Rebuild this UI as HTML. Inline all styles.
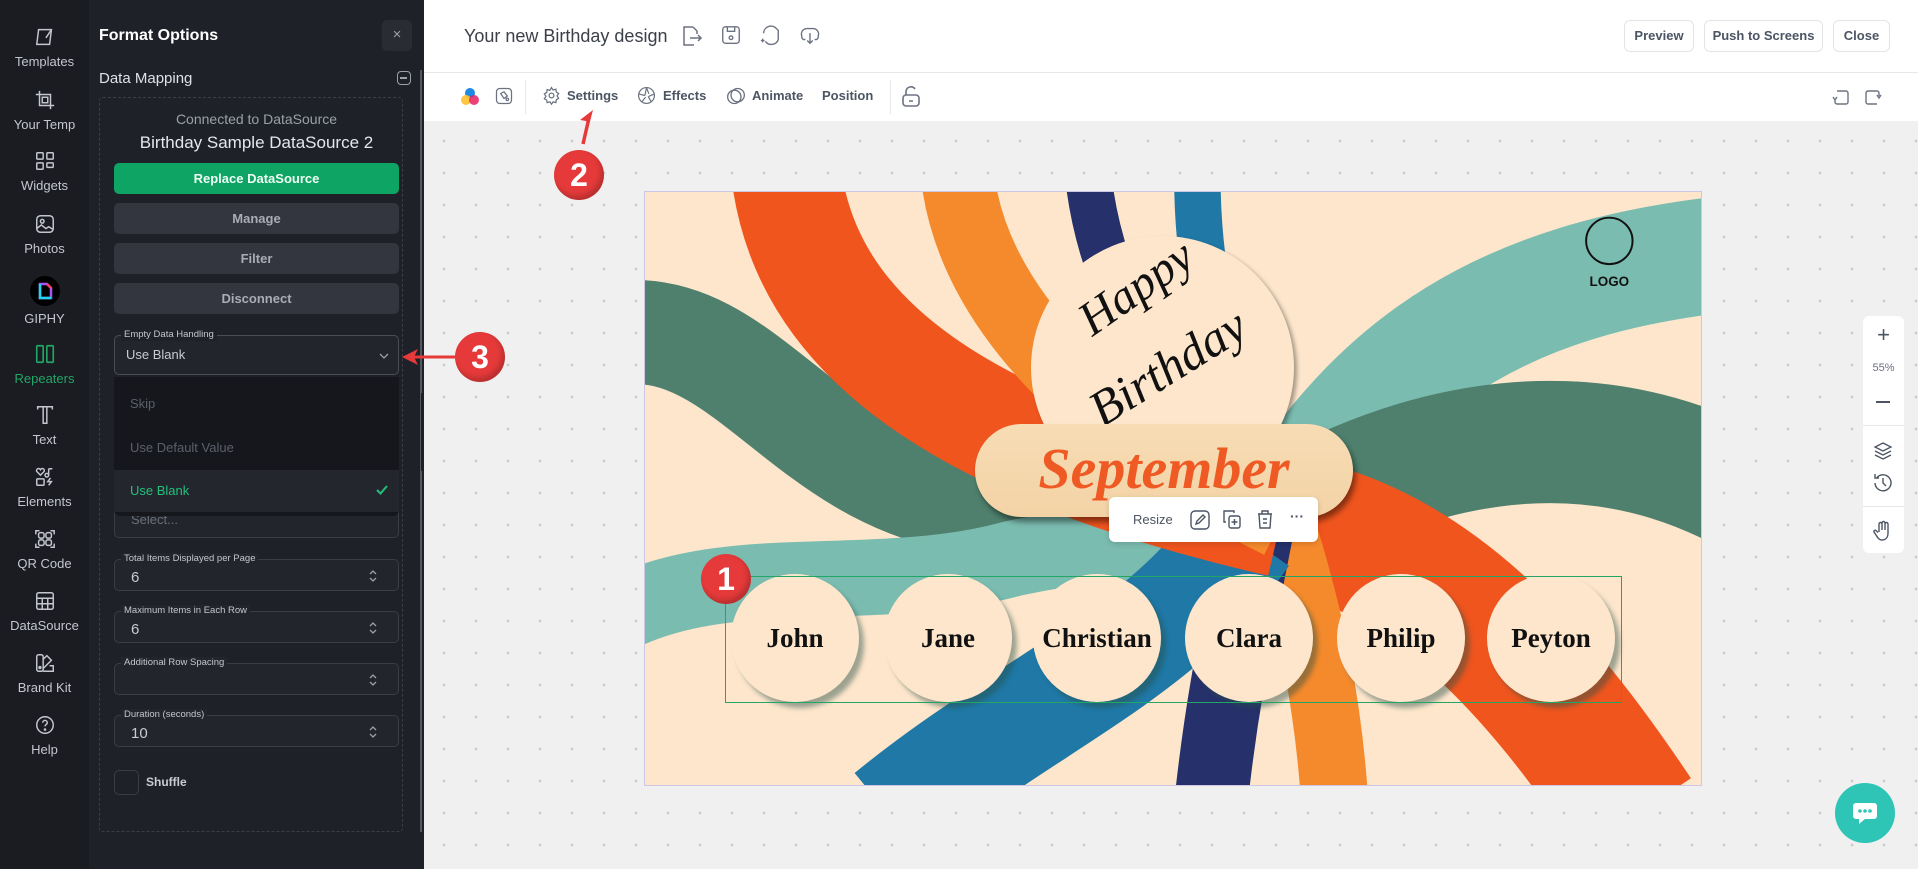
<!DOCTYPE html>
<html><head><meta charset="utf-8">
<style>
*{box-sizing:border-box;margin:0;padding:0}
body{width:1918px;height:869px;overflow:hidden;position:relative;font-family:"Liberation Sans",sans-serif;background:#f0f0f0}
.a{position:absolute}
#bar{left:0;top:0;width:89px;height:869px;background:#1a1c22}
#panel{left:89px;top:0;width:335px;height:869px;background:#1f2129}
.ni{position:absolute;left:0;width:89px;text-align:center;color:#c4c7cd;font-size:13px}
.ni svg{display:block;margin:0 auto}
.btn{position:absolute;left:114px;width:285px;height:31px;border-radius:5px;background:#34363f;color:#a9acb4;font-weight:bold;font-size:13px;text-align:center;line-height:31px}
.fs{position:absolute;left:114px;width:285px;height:32px;border:1px solid #3a3d46;border-radius:5px;background:#23252d}
.fs .lb{position:absolute;left:6px;top:-7px;font-size:9.5px;color:#c4c7cd;background:#23252d;padding:0 3px;line-height:12px}
.fs .v{position:absolute;left:16px;top:9px;font-size:15px;color:#c9ccd2}
.fs svg{position:absolute;right:20px;top:8px}
.tb{position:absolute;top:20px;height:32px;border:1px solid #e2e4e8;border-radius:6px;background:#fff;color:#4b5563;font-size:13px;font-weight:bold;text-align:center;line-height:30px}
.ti{position:absolute;top:88px;font-size:13px;font-weight:bold;color:#4b5563}
.badge{position:absolute;width:50px;height:50px;border-radius:50%;background:#e63a3a;color:#fff;font-weight:bold;font-size:32px;text-align:center;line-height:50px;box-shadow:inset -3px -4px 6px rgba(0,0,0,.2)}
.nm{position:absolute;top:574px;width:128px;height:128px;border-radius:50%;background:#fde6cc;box-shadow:5px 6px 5px rgba(40,80,70,.45);font-family:"Liberation Serif",serif;font-weight:bold;font-size:27px;color:#111;text-align:center;line-height:128px}
</style></head><body>

<div id="bar" class="a">
 <div class="ni" style="top:26px"><svg width="22" height="22" viewBox="0 0 24 24" fill="none" stroke="#c4c7cd" stroke-width="1.6"><path d="M5 4h14l-2 16H3z"/><path d="M19 4l-6 9"/></svg><div style="margin-top:6px">Templates</div></div>
 <div class="ni" style="top:89px"><svg width="22" height="22" viewBox="0 0 24 24" fill="none" stroke="#c4c7cd" stroke-width="1.6"><path d="M6 2v16h16M2 6h16v16"/><rect x="9" y="9" width="6" height="6"/></svg><div style="margin-top:6px">Your Temp</div></div>
 <div class="ni" style="top:150px"><svg width="22" height="22" viewBox="0 0 24 24" fill="none" stroke="#c4c7cd" stroke-width="1.6"><rect x="3" y="3" width="7" height="7" rx="1"/><rect x="14" y="3" width="7" height="7" rx="1"/><rect x="3" y="14" width="7" height="7" rx="1"/><rect x="14" y="14" width="7" height="5" rx="1"/></svg><div style="margin-top:6px">Widgets</div></div>
 <div class="ni" style="top:213px"><svg width="22" height="22" viewBox="0 0 24 24" fill="none" stroke="#c4c7cd" stroke-width="1.6"><rect x="3" y="3" width="18" height="18" rx="4"/><circle cx="9" cy="9" r="2"/><path d="M3 17l5-4 5 4 3-2 5 3"/></svg><div style="margin-top:6px">Photos</div></div>
 <div class="ni" style="top:276px"><div style="width:30px;height:30px;border-radius:50%;background:#000;margin:0 auto;position:relative"><svg width="30" height="30" viewBox="0 0 30 30"><path d="M10 8h7l4 4v10H10z" fill="none" stroke="#a855f7" stroke-width="2.5"/><path d="M10 8v14h11" fill="none" stroke="#22d3ee" stroke-width="2.5"/><path d="M17 8l4 4" stroke="#f43f5e" stroke-width="2.5"/></svg></div><div style="margin-top:5px">GIPHY</div></div>
 <div class="ni" style="top:343px;color:#22a565"><svg width="22" height="22" viewBox="0 0 24 24" fill="none" stroke="#22a565" stroke-width="1.8"><rect x="3" y="3" width="7" height="18" rx="1"/><rect x="14" y="3" width="7" height="18" rx="1"/></svg><div style="margin-top:6px">Repeaters</div></div>
 <div class="ni" style="top:404px"><svg width="22" height="22" viewBox="0 0 24 24" fill="none" stroke="#c4c7cd" stroke-width="1.6"><path d="M4 6V3h16v3M10 3v18h4V3"/></svg><div style="margin-top:6px">Text</div></div>
 <div class="ni" style="top:466px"><svg width="22" height="22" viewBox="0 0 24 24" fill="none" stroke="#c4c7cd" stroke-width="1.6"><path d="M7 10l-4-4a2 2 0 014-2 2 2 0 014 2z"/><path d="M16 3v7M16 3h4"/><circle cx="14" cy="10" r="2"/><rect x="3" y="14" width="8" height="7" rx="1"/><path d="M18 13l-3 4h4l-3 4"/></svg><div style="margin-top:6px">Elements</div></div>
 <div class="ni" style="top:528px"><svg width="22" height="22" viewBox="0 0 24 24" fill="none" stroke="#c4c7cd" stroke-width="1.6"><rect x="5" y="5" width="6" height="6" rx="2"/><rect x="13" y="5" width="6" height="6" rx="2"/><rect x="5" y="13" width="6" height="6" rx="2"/><rect x="13" y="13" width="6" height="6" rx="2"/><path d="M2 7V3h4M18 3h4v4M2 17v4h4M18 21h4v-4"/></svg><div style="margin-top:6px">QR Code</div></div>
 <div class="ni" style="top:590px"><svg width="22" height="22" viewBox="0 0 24 24" fill="none" stroke="#c4c7cd" stroke-width="1.6"><rect x="3" y="3" width="18" height="18" rx="2"/><path d="M3 9h18M3 15h18M9 9v12M15 9v12"/></svg><div style="margin-top:6px">DataSource</div></div>
 <div class="ni" style="top:652px"><svg width="22" height="22" viewBox="0 0 24 24" fill="none" stroke="#c4c7cd" stroke-width="1.6"><rect x="3" y="3" width="7" height="18" rx="2"/><path d="M10 8l4-4 5 5-9 9M10 21h11v-6h-4"/><circle cx="6.5" cy="17" r="1"/></svg><div style="margin-top:6px">Brand Kit</div></div>
 <div class="ni" style="top:714px"><svg width="22" height="22" viewBox="0 0 24 24" fill="none" stroke="#c4c7cd" stroke-width="1.6"><circle cx="12" cy="12" r="9"/><path d="M9.5 9.5a2.5 2.5 0 115 0c0 1.8-2.5 2-2.5 4"/><circle cx="12" cy="17" r=".6" fill="#c4c7cd"/></svg><div style="margin-top:6px">Help</div></div>
</div>

<div id="panel" class="a">
 <div class="a" style="left:10px;top:27px;color:#fff;font-weight:bold;font-size:16px">Format Options</div>
 <div class="a" style="left:293px;top:20px;width:30px;height:31px;border-radius:5px;background:#2a2c34;color:#9ca0a8;font-size:15px;text-align:center;line-height:30px">×</div>
 <div class="a" style="left:10px;top:70px;color:#dfe1e5;font-size:15px">Data Mapping</div>
 <div class="a" style="left:308px;top:71px;width:14px;height:14px;border:1.5px solid #9ca0a8;border-radius:4px"><div style="position:absolute;left:2px;top:5px;width:7px;height:1.5px;background:#9ca0a8"></div></div>
 <div class="a" style="left:331px;top:70px;width:2px;height:762px;background:#55585f"></div>
 <div class="a" style="left:10px;top:97px;width:304px;height:735px;border:1px dashed #3b3e46;border-radius:4px"></div>
</div>
<div class="a" style="left:89px;top:111px;width:335px;text-align:center;color:#9aa0a8;font-size:14px">Connected to DataSource</div>
<div class="a" style="left:89px;top:133px;width:335px;text-align:center;color:#e5e7eb;font-size:17px">Birthday Sample DataSource 2</div>
<div class="btn" style="top:163px;background:#0ea463;color:#f0fff6">Replace DataSource</div>
<div class="btn" style="top:203px">Manage</div>
<div class="btn" style="top:243px">Filter</div>
<div class="btn" style="top:283px">Disconnect</div>

<div class="fs" style="top:335px;height:40px;border-color:#4a4d56"><div class="lb" style="background:#1f2129">Empty Data Handling</div><div class="v" style="top:11px;left:11px;font-size:13px">Use Blank</div>
<svg width="12" height="12" viewBox="0 0 12 12" style="top:14px;right:8px"><path d="M2 4l4 4 4-4" fill="none" stroke="#9ca0a8" stroke-width="1.3"/></svg></div>
<div class="fs" style="top:502px;height:36px"><div class="v" style="top:9px;font-size:13px;color:#6b6f78;clip-path:inset(4px 0 0 0)">Select...</div></div>
<div class="a" style="left:114px;top:377px;width:285px;height:139px;background:#15171c;border-radius:0 0 6px 6px"></div>
<div class="a" style="left:130px;top:396px;color:#5c606a;font-size:13px">Skip</div>
<div class="a" style="left:130px;top:440px;color:#5c606a;font-size:13px">Use Default Value</div>
<div class="a" style="left:114px;top:470px;width:285px;height:42px;background:#24262e"></div>
<div class="a" style="left:130px;top:483px;color:#22c07a;font-size:13px">Use Blank</div>
<svg class="a" style="left:375px;top:484px" width="14" height="12" viewBox="0 0 14 12"><path d="M2 6l3.5 3.5L12 2" fill="none" stroke="#22c07a" stroke-width="2"/></svg>

<div class="fs" style="top:559px"><div class="lb">Total Items Displayed per Page</div><div class="v">6</div><svg width="10" height="16" viewBox="0 0 10 16"><path d="M2 6l3-3 3 3M2 10l3 3 3-3" fill="none" stroke="#9ca0a8" stroke-width="1.3"/></svg></div>
<div class="fs" style="top:611px"><div class="lb">Maximum Items in Each Row</div><div class="v">6</div><svg width="10" height="16" viewBox="0 0 10 16"><path d="M2 6l3-3 3 3M2 10l3 3 3-3" fill="none" stroke="#9ca0a8" stroke-width="1.3"/></svg></div>
<div class="fs" style="top:663px"><div class="lb">Additional Row Spacing</div><svg width="10" height="16" viewBox="0 0 10 16"><path d="M2 6l3-3 3 3M2 10l3 3 3-3" fill="none" stroke="#9ca0a8" stroke-width="1.3"/></svg></div>
<div class="fs" style="top:715px"><div class="lb">Duration (seconds)</div><div class="v">10</div><svg width="10" height="16" viewBox="0 0 10 16"><path d="M2 6l3-3 3 3M2 10l3 3 3-3" fill="none" stroke="#9ca0a8" stroke-width="1.3"/></svg></div>
<div class="a" style="left:114px;top:770px;width:25px;height:25px;border:1px solid #3a3d46;border-radius:5px;background:#1f2129"></div>
<div class="a" style="left:146px;top:775px;color:#c9ccd2;font-size:12px;font-weight:bold">Shuffle</div>
<div class="a" style="left:421px;top:393px;width:14px;height:78px;background:#1f2129;border-radius:0 8px 8px 0"></div>
<svg class="a" style="left:423px;top:426px" width="10" height="12" viewBox="0 0 10 12"><path d="M7 2L3 6l4 4" fill="none" stroke="#c4c7cd" stroke-width="1.6"/></svg>

<div class="a" style="left:424px;top:0;width:1494px;height:121px;background:#fff"></div>
<div class="a" style="left:424px;top:72px;width:1494px;height:1px;background:#e6e7ea"></div>
<div class="a" style="left:464px;top:26px;font-size:18px;color:#3b3f48">Your new Birthday design</div>
<svg class="a" style="left:679px;top:24px" width="24" height="24" viewBox="0 0 24 24" fill="none" stroke="#6b7280" stroke-width="1.5"><path d="M14 3H5v18h10M14 3l4 4v3"/><path d="M11 14h11M19 11l3 3-3 3"/></svg>
<svg class="a" style="left:720px;top:24px" width="22" height="22" viewBox="0 0 24 24" fill="none" stroke="#6b7280" stroke-width="1.5"><rect x="3" y="3" width="18" height="18" rx="3"/><path d="M8 3v5h8V3"/><circle cx="12" cy="15" r="2"/></svg>
<svg class="a" style="left:759px;top:24px" width="22" height="22" viewBox="0 0 24 24" fill="none" stroke="#6b7280" stroke-width="1.5"><path d="M5 10a8 8 0 0114-5l2 2v10a8 8 0 01-14 2"/><path d="M4 16v4M2 18h4"/></svg>
<svg class="a" style="left:799px;top:24px" width="22" height="22" viewBox="0 0 24 24" fill="none" stroke="#6b7280" stroke-width="1.5"><path d="M7 17H5a4 4 0 01-2-4 6 6 0 016-8h6a6 6 0 016 8 4 4 0 01-2 4h-2"/><path d="M12 10v11M9 18l3 3 3-3"/></svg>
<div class="tb" style="left:1624px;width:70px">Preview</div>
<div class="tb" style="left:1704px;width:119px">Push to Screens</div>
<div class="tb" style="left:1833px;width:57px">Close</div>

<svg class="a" style="left:459px;top:86px" width="22" height="22" viewBox="0 0 22 22"><circle cx="11" cy="7" r="5" fill="#1e88e5"/><circle cx="7" cy="14" r="5" fill="#fbc02d" opacity=".9"/><circle cx="15" cy="14" r="5" fill="#e91e63" opacity=".85"/></svg>
<svg class="a" style="left:494px;top:86px" width="20" height="20" viewBox="0 0 24 24" fill="none" stroke="#6b7280" stroke-width="1.5"><rect x="3" y="3" width="18" height="18" rx="4"/><path d="M8 9l4-2 4 5-4 3z"/><circle cx="16" cy="16" r="1.5"/></svg>
<div class="a" style="left:525px;top:80px;width:1px;height:34px;background:#e6e7ea"></div>
<svg class="a" style="left:542px;top:86px" width="19" height="19" viewBox="0 0 24 24" fill="none" stroke="#6b7280" stroke-width="1.6"><circle cx="12" cy="12" r="3"/><path d="M12 2l2 3 3.5-1 .5 3.5 3 2-2 3 2 3-3 2-.5 3.5-3.5-1-2 3-2-3-3.5 1L6 18l-3-2 2-3-2-3 3-2 .5-3.5 3.5 1z"/></svg>
<div class="ti" style="left:567px">Settings</div>
<svg class="a" style="left:637px;top:86px" width="19" height="19" viewBox="0 0 24 24" fill="none" stroke="#6b7280" stroke-width="1.5"><circle cx="12" cy="12" r="10"/><path d="M12 2l3 8M22 10l-7 3M18 20l-4-7M6 20l5-6M2 10l8 2M12 2l-2 10"/></svg>
<div class="ti" style="left:663px">Effects</div>
<svg class="a" style="left:726px;top:86px" width="20" height="20" viewBox="0 0 24 24" fill="none" stroke="#6b7280" stroke-width="1.6"><circle cx="10" cy="13" r="8"/><circle cx="14" cy="11" r="8"/></svg>
<div class="ti" style="left:752px">Animate</div>
<div class="ti" style="left:822px">Position</div>
<div class="a" style="left:890px;top:80px;width:1px;height:34px;background:#e6e7ea"></div>
<svg class="a" style="left:901px;top:84px" width="20" height="24" viewBox="0 0 20 24" fill="none" stroke="#6b7280" stroke-width="1.6"><rect x="2" y="11" width="16" height="11" rx="3"/><path d="M5 11V7a5 5 0 019-2M8 17h4"/></svg>
<svg class="a" style="left:1832px;top:88px" width="18" height="18" viewBox="0 0 18 18" fill="none" stroke="#6b7280" stroke-width="1.4"><path d="M5 3h9a2 2 0 012 2v9a2 2 0 01-2 2H5a2 2 0 01-2-2v-2"/><path d="M1 9l2 3 2-3"/></svg>
<svg class="a" style="left:1864px;top:88px" width="18" height="18" viewBox="0 0 18 18" fill="none" stroke="#6b7280" stroke-width="1.4"><path d="M13 16H4a2 2 0 01-2-2V5a2 2 0 012-2h9a2 2 0 012 2v3"/><path d="M13 7l2 3 2-3"/></svg>

<div class="a" style="left:424px;top:121px;width:1494px;height:748px;background-color:#f0f0f0;background-image:radial-gradient(circle,#cdcdcd 1.2px,transparent 1.6px);background-size:32px 32px;background-position:4px 4px"></div>

<svg class="a" style="left:645px;top:192px;outline:1px solid #cfc6e6" width="1056" height="593" viewBox="0 0 864 485" preserveAspectRatio="none">
 <rect width="864" height="485" fill="#fde6cc"/>
 <g fill="none" stroke-linecap="butt">
  <path d="M-20 115 C80 105 130 230 260 252 C360 268 440 258 530 270" stroke="#4f7f6d" stroke-width="85"/>
  <path d="M-20 345 C70 300 190 330 300 300 C390 280 450 288 530 280" stroke="#7bbcb0" stroke-width="62"/>
  <path d="M520 270 C600 140 700 70 890 50" stroke="#7bbcb0" stroke-width="95"/>
  <path d="M520 270 C640 200 770 180 890 240" stroke="#4f7f6d" stroke-width="100"/>
  <path d="M520 270 C640 290 730 390 810 510" stroke="#f0551e" stroke-width="110"/>
  <path d="M520 270 C545 350 560 420 565 510" stroke="#f58a2c" stroke-width="55"/>
  <path d="M500 280 C480 380 470 430 462 510" stroke="#26306b" stroke-width="60"/>
  <path d="M490 280 C420 380 310 420 200 510" stroke="#1f78a6" stroke-width="90"/>
  <path d="M115 -20 C130 120 260 210 520 270" stroke="#f0551e" stroke-width="90"/>
  <path d="M255 -20 C265 100 380 200 520 270" stroke="#f58a2c" stroke-width="60"/>
  <path d="M362 -20 C372 100 450 200 520 270" stroke="#26306b" stroke-width="38"/>
  <path d="M452 -20 C450 100 490 200 520 270" stroke="#1f78a6" stroke-width="38"/>
 </g>
 <circle cx="789" cy="40" r="19" fill="none" stroke="#111" stroke-width="1.6"/>
 <text x="789" y="77" font-family="Liberation Sans" font-weight="bold" font-size="11" text-anchor="middle" fill="#111">LOGO</text>
</svg>
<div class="a" style="left:1031px;top:236px;width:263px;height:263px;border-radius:50%;background:#fde6cc;box-shadow:3px 3px 4px rgba(0,0,0,.35)"></div>
<div class="a" style="left:1070px;top:305px;font-family:'Liberation Serif',serif;font-style:italic;font-size:48px;color:#111;transform:rotate(-35deg);transform-origin:left top;line-height:48px">Happy</div>
<div class="a" style="left:1080px;top:392px;font-family:'Liberation Serif',serif;font-style:italic;font-size:50px;color:#111;transform:rotate(-32deg);transform-origin:left top;line-height:50px">Birthday</div>
<div class="a" style="left:975px;top:424px;width:378px;height:93px;border-radius:47px;background:linear-gradient(#f7dcb4,#f3d3a6);box-shadow:3px 5px 6px rgba(0,0,0,.45)"></div>
<div class="a" style="left:975px;top:434px;width:378px;text-align:center;font-family:'Liberation Serif',serif;font-style:italic;font-weight:bold;font-size:58px;color:#ef5a24;line-height:70px">September</div>
<div class="a" style="left:1109px;top:497px;width:209px;height:45px;background:#fff;border-radius:6px;box-shadow:0 2px 6px rgba(0,0,0,.15)"></div>
<div class="a" style="left:1133px;top:512px;font-size:13px;color:#4b5563">Resize</div>
<svg class="a" style="left:1190px;top:510px" width="20" height="20" viewBox="0 0 20 20" fill="none" stroke="#4b5563" stroke-width="1.4"><rect x="1" y="1" width="18" height="18" rx="4"/><path d="M6 14l1-3 6-6 2 2-6 6z"/></svg>
<svg class="a" style="left:1222px;top:509px" width="20" height="21" viewBox="0 0 20 21" fill="none" stroke="#4b5563" stroke-width="1.4"><path d="M4 13H2V2h10v2"/><rect x="7" y="7" width="11" height="12" rx="2"/><path d="M12.5 10v6M9.5 13h6"/></svg>
<svg class="a" style="left:1256px;top:509px" width="18" height="21" viewBox="0 0 18 21" fill="none" stroke="#4b5563" stroke-width="1.4"><path d="M2 5h14M6 5V2h6v3M3 5l1 14h10l1-14M7 10h4M7 14h4"/></svg>
<div class="a" style="left:1290px;top:508px;font-size:14px;color:#4b5563;font-weight:bold">···</div>
<div class="nm" style="left:731px">John</div>
<div class="nm" style="left:884px">Jane</div>
<div class="nm" style="left:1033px">Christian</div>
<div class="nm" style="left:1185px">Clara</div>
<div class="nm" style="left:1337px">Philip</div>
<div class="nm" style="left:1487px">Peyton</div>
<div class="a" style="left:725px;top:576px;width:897px;height:127px;border:1.5px solid #22a565"></div>

<div class="a" style="left:1863px;top:316px;width:41px;height:237px;background:#fff;border-radius:6px"></div>
<div class="a" style="left:1863px;top:322px;width:41px;text-align:center;font-size:22px;color:#4b5563">+</div>
<div class="a" style="left:1863px;top:362px;width:41px;text-align:center;font-size:11px;color:#6b7280">55%</div>
<div class="a" style="left:1876px;top:401px;width:14px;height:1.5px;background:#4b5563"></div>
<div class="a" style="left:1863px;top:425px;width:41px;height:1px;background:#e6e7ea"></div>
<svg class="a" style="left:1873px;top:441px" width="20" height="20" viewBox="0 0 20 20" fill="none" stroke="#4b5563" stroke-width="1.3"><path d="M10 2l8 4-8 4-8-4z"/><path d="M2 10l8 4 8-4M2 14l8 4 8-4"/></svg>
<svg class="a" style="left:1872px;top:472px" width="22" height="22" viewBox="0 0 22 22" fill="none" stroke="#4b5563" stroke-width="1.4"><path d="M3 11a8 8 0 102-5.5"/><path d="M3 2v4h4M11 6v5l3 3"/></svg>
<div class="a" style="left:1863px;top:506px;width:41px;height:1px;background:#e6e7ea"></div>
<svg class="a" style="left:1872px;top:520px" width="22" height="22" viewBox="0 0 22 22" fill="none" stroke="#4b5563" stroke-width="1.4"><path d="M7 12V4a1.5 1.5 0 013 0v6V3a1.5 1.5 0 013 0v7V4a1.5 1.5 0 013 0v9c0 4-2 7-6 7-3 0-4-2-6-5l-2-3a1.3 1.3 0 012-1.5l2 2"/></svg>

<div class="a" style="left:1835px;top:783px;width:60px;height:60px;border-radius:50%;background:#2ec4b6"></div>
<svg class="a" style="left:1851px;top:800px" width="28" height="26" viewBox="0 0 28 26"><path d="M5 3h18a3 3 0 013 3v10a3 3 0 01-3 3h-9l-6 5v-5H5a3 3 0 01-3-3V6a3 3 0 013-3z" fill="#fff"/><circle cx="9" cy="11" r="1.8" fill="#2ec4b6"/><circle cx="14" cy="11" r="1.8" fill="#2ec4b6"/><circle cx="19" cy="11" r="1.8" fill="#2ec4b6"/></svg>

<div class="badge" style="left:701px;top:554px">1</div>
<div class="badge" style="left:554px;top:150px">2</div>
<svg class="a" style="left:575px;top:100px" width="30" height="46" viewBox="0 0 30 46"><path d="M8 44l6-26" stroke="#e63a3a" stroke-width="3.5"/><path d="M18 10l-13 10 6 1 3 4z" fill="#e63a3a"/></svg>
<div class="badge" style="left:455px;top:332px">3</div>
<svg class="a" style="left:400px;top:347px" width="60" height="20" viewBox="0 0 60 20"><path d="M14 10h46" stroke="#e63a3a" stroke-width="3"/><path d="M2 10l16-8-4 8 4 8z" fill="#e63a3a"/></svg>
</body></html>
